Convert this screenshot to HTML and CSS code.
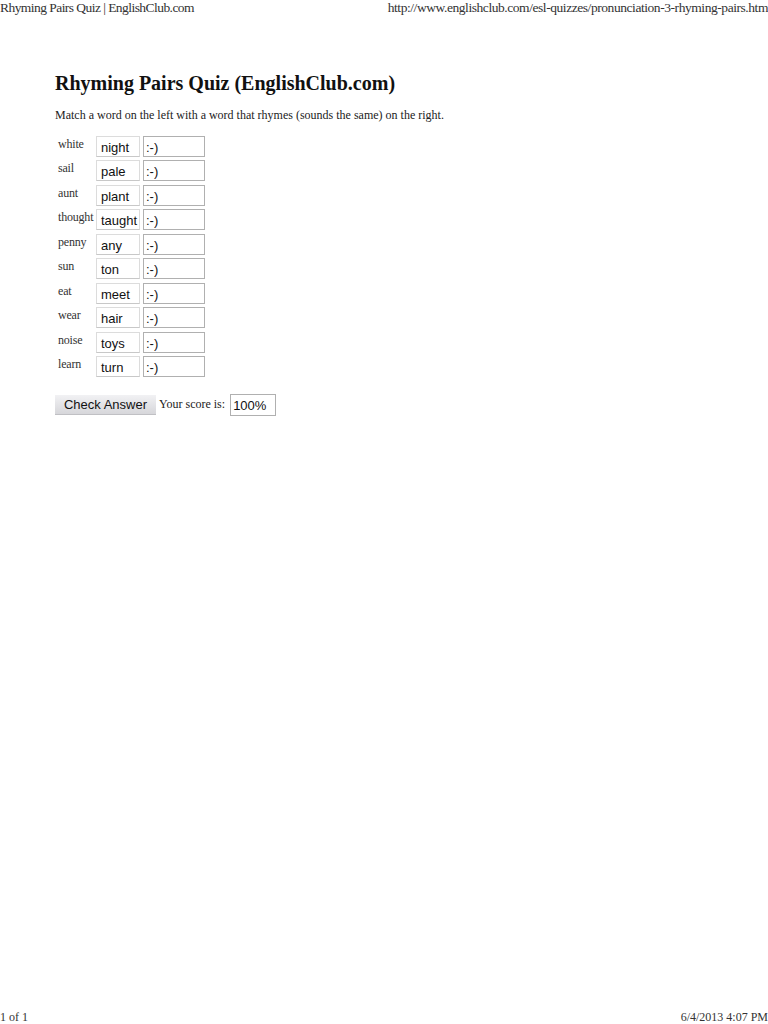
FILE: index.html
```html
<!DOCTYPE html>
<html>
<head>
<meta charset="utf-8">
<link rel="stylesheet" href="styles.css">
</head>
<body>
<div class="page">
  <div class="topbar">
    <span class="top-title">Rhyming Pairs Quiz | EnglishClub.com</span>
    <span class="top-url">http://www.englishclub.com/esl-quizzes/pronunciation-3-rhyming-pairs.htm</span>
  </div>
  <div class="content">
    <h1 class="title">Rhyming Pairs Quiz (EnglishClub.com)</h1>
    <p class="intro">Match a word on the left with a word that rhymes (sounds the same) on the right.</p>
    <div class="quiz">
      <div class="row"><span class="word">white</span><span class="box ans">night</span><span class="box res">:-)</span></div>
      <div class="row"><span class="word">sail</span><span class="box ans">pale</span><span class="box res">:-)</span></div>
      <div class="row"><span class="word">aunt</span><span class="box ans">plant</span><span class="box res">:-)</span></div>
      <div class="row"><span class="word">thought</span><span class="box ans">taught</span><span class="box res">:-)</span></div>
      <div class="row"><span class="word">penny</span><span class="box ans">any</span><span class="box res">:-)</span></div>
      <div class="row"><span class="word">sun</span><span class="box ans">ton</span><span class="box res">:-)</span></div>
      <div class="row"><span class="word">eat</span><span class="box ans">meet</span><span class="box res">:-)</span></div>
      <div class="row"><span class="word">wear</span><span class="box ans">hair</span><span class="box res">:-)</span></div>
      <div class="row"><span class="word">noise</span><span class="box ans">toys</span><span class="box res">:-)</span></div>
      <div class="row"><span class="word">learn</span><span class="box ans">turn</span><span class="box res">:-)</span></div>
    </div>
    <div class="scorebar">
      <span class="btn">Check Answer</span>
      <span class="score-label">Your score is:</span>
      <span class="box score">100%</span>
    </div>
  </div>
  <div class="footer">
    <span>1 of 1</span>
    <span>6/4/2013 4:07 PM</span>
  </div>
</div>
</body>
</html>
```
FILE: styles.css
```css
html, body {
  margin: 0;
  padding: 0;
  background: #ffffff;
}
body {
  font-family: "Liberation Serif", "Times New Roman", serif;
  color: #222;
}
.page {
  width: 768px;
  height: 1024px;
  display: flex;
  flex-direction: column;
  overflow: hidden;
}
.topbar {
  display: flex;
  justify-content: space-between;
  white-space: nowrap;
  font-size: 13.5px;
  line-height: 16px;
  letter-spacing: -0.55px;
  color: #333;
  height: 16px;
}
.top-url {
  letter-spacing: -0.44px;
}
.content {
  flex: 1;
  padding: 55px 0 0 55px;
}
.title {
  margin: 0;
  font-size: 20px;
  line-height: 24px;
  font-weight: bold;
  color: #111;
}
.intro {
  margin: 13px 0 0 0;
  font-size: 12px;
  line-height: 14px;
  color: #222;
}
.quiz {
  margin-top: 14px;
  display: flex;
  flex-direction: column;
}
.row {
  display: flex;
  align-items: flex-start;
  height: 24.45px;
}
.word {
  width: 38px;
  padding-left: 3px;
  font-size: 12px;
  line-height: 14px;
  padding-top: 1px;
  color: #333;
  letter-spacing: -0.2px;
  white-space: nowrap;
}
.box {
  box-sizing: border-box;
  height: 21px;
  border: 1px solid #c8c8c8;
  border-top-color: #a8a8a8;
  font-family: "Liberation Sans", Arial, sans-serif;
  font-size: 13px;
  line-height: 22px;
  color: #111;
  padding-left: 4px;
  background: #fff;
  white-space: nowrap;
}
.ans {
  width: 44px;
  margin-right: 3px;
  border-color: #dcdcdc;
  border-bottom-color: #c8c8c8;
}
.res {
  width: 62px;
  border-color: #b0b0b0;
  padding-left: 2px;
}
.scorebar {
  margin-top: 14px;
  display: flex;
  align-items: center;
}
.btn {
  box-sizing: border-box;
  width: 101px;
  height: 20px;
  background: linear-gradient(#f2f2f4, #d6d6da);
  border-bottom: 1px solid #c0c0c4;
  font-family: "Liberation Sans", Arial, sans-serif;
  font-size: 13px;
  line-height: 20px;
  text-align: center;
  color: #111;
}
.score-label {
  margin-left: 3px;
  font-size: 12px;
  color: #222;
  margin-right: 5px;
  position: relative;
  top: -1px;
}
.score {
  width: 46px;
  height: 22px;
  border-color: #b0b0b0;
  padding-left: 2px;
}
.footer {
  display: flex;
  justify-content: space-between;
  font-size: 12px;
  line-height: 14px;
  color: #333;
  height: 14px;
  margin-top: auto;
  padding-bottom: 0;
}
```
